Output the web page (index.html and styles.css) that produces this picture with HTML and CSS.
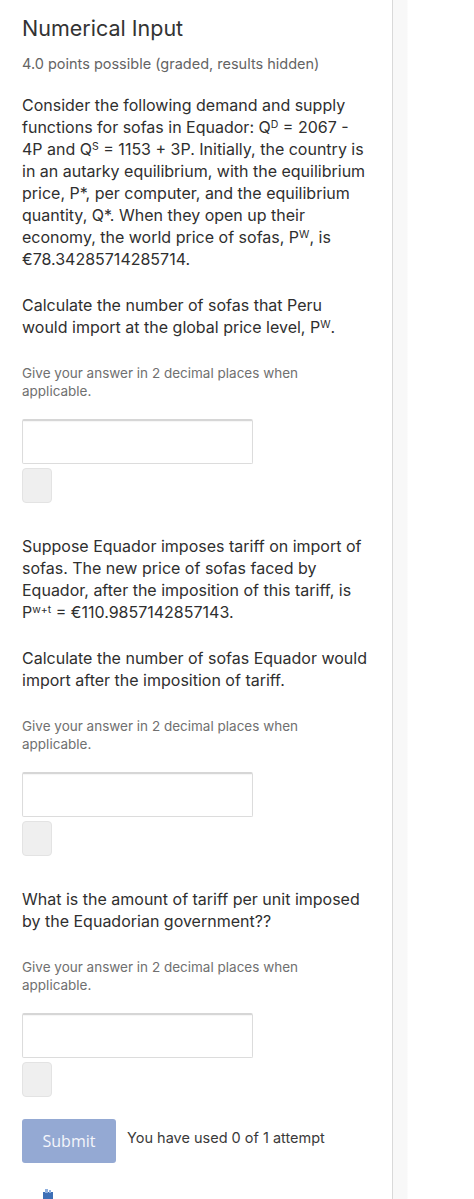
FILE: index.html
```html
<!DOCTYPE html>
<html lang="en">
<head>
<meta charset="utf-8">
<title>Numerical Input</title>
<link rel="stylesheet" href="styles.css">
</head>
<body>
<div class="page">
  <main class="problem">
    <h2 class="title">Numerical Input</h2>
    <div class="points">4.0 points possible (graded, results hidden)</div>

    <p class="text">Consider the following demand and supply functions for sofas in Equador: Q<sup>D</sup> = 2067 - 4P and Q<sup>S</sup> = 1153 + 3P. Initially, the country is in an autarky equilibrium, with the equilibrium price, P*, per computer, and the equilibrium quantity, Q*. When they open up their economy, the world price of sofas, P<sup>W</sup>, is €78.34285714285714.</p>
    <p class="text">Calculate the number of sofas that Peru would import at the global price level, P<sup>W</sup>.</p>
    <p class="hint">Give your answer in 2 decimal places when applicable.</p>
    <div class="answer">
      <input class="field" type="text" aria-label="Answer 1">
      <span class="status"></span>
    </div>

    <p class="text">Suppose Equador imposes tariff on import of sofas. The new price of sofas faced by Equador, after the imposition of this tariff, is P<sup>w+t</sup> = €110.9857142857143.</p>
    <p class="text">Calculate the number of sofas Equador would import after the imposition of tariff.</p>
    <p class="hint">Give your answer in 2 decimal places when applicable.</p>
    <div class="answer">
      <input class="field" type="text" aria-label="Answer 2">
      <span class="status"></span>
    </div>

    <p class="text">What is the amount of tariff per unit imposed by the Equadorian government??</p>
    <p class="hint">Give your answer in 2 decimal places when applicable.</p>
    <div class="answer">
      <input class="field" type="text" aria-label="Answer 3">
      <span class="status"></span>
    </div>

    <div class="actions">
      <button class="submit" type="button">Submit</button>
      <span class="attempts">You have used 0 of 1 attempt</span>
    </div>
    <div class="footer-icon">
      <svg width="14" height="10" viewBox="0 0 14 10"><rect x="2" y="3" width="10" height="7" fill="#3d6fb6"/><rect x="4" y="0" width="3" height="4" fill="#8fb0de"/><rect x="8" y="1" width="2" height="3" fill="#8fb0de"/></svg>
    </div>
  </main>
  <aside class="side"></aside>
</div>
</body>
</html>
```

FILE: styles.css
```css
html, body {
  margin: 0;
  padding: 0;
  background: #ffffff;
}

body {
  font-family: Inter, "Liberation Sans", Arial, sans-serif;
  color: #313131;
  width: 474px;
  height: 1199px;
  overflow: hidden;
}

.page {
  display: flex;
  align-items: stretch;
  min-height: 1199px;
}

.problem {
  width: 370px;
  padding: 0 0 0 22px;
  border-right: 1px solid #d9d9d9;
  display: flex;
  flex-direction: column;
  align-items: flex-start;
}

.side {
  flex: 1;
  background: linear-gradient(to right, #f8f8f8 0, #f8f8f8 14px, #ffffff 15px);
}

.title {
  margin: 14px 0 0;
  font-size: 21.5px;
  line-height: 28px;
  font-weight: 400;
  color: #333333;
}

.points {
  margin-top: 12px;
  font-size: 14.5px;
  line-height: 20px;
  color: #646464;
}

.text {
  margin: 24px 0 0;
  font-size: 16px;
  line-height: 22px;
  width: 350px;
  color: #2f2f2f;
}

.points + .text {
  margin-top: 20px;
}

.answer + .text {
  margin-top: 32px;
}

.text sup {
  font-size: 10.5px;
  line-height: 0;
  vertical-align: 0.5em;
}

.hint {
  margin: 26px 0 0;
  font-size: 13.5px;
  line-height: 18px;
  color: #707070;
  width: 300px;
}

.answer {
  margin-top: 19px;
  display: flex;
  flex-direction: column;
  gap: 4px;
}

.field {
  box-sizing: border-box;
  width: 231px;
  height: 45px;
  margin: 0;
  border: 1px solid #dcdcdc;
  border-top: 2px solid #d6d6d6;
  border-radius: 2px;
  background: #ffffff;
  box-shadow: inset 0 1px 1px rgba(0, 0, 0, 0.04);
  font: 16px Inter, sans-serif;
  padding: 0 8px;
}

.status {
  display: block;
  width: 30px;
  height: 35px;
  box-sizing: border-box;
  border: 1px solid #e3e3e3;
  border-radius: 4px;
  background: #efefef;
}

.actions {
  margin-top: 22px;
  display: flex;
  align-items: flex-start;
  gap: 11px;
}

.submit {
  width: 94px;
  height: 44px;
  border: none;
  border-radius: 3px;
  background: #94a9d3;
  color: #f4f6fb;
  font-family: "Open Sans", sans-serif;
  font-size: 16px;
  padding: 0;
}

.attempts {
  font-size: 14.5px;
  line-height: 20px;
  margin-top: 9px;
  color: #3a3a3a;
}

.footer-icon {
  margin: 26px 0 0 19px;
  line-height: 0;
}
```
